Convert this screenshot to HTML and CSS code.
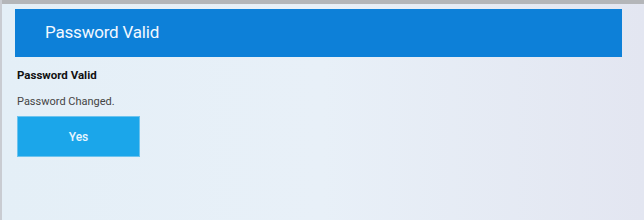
FILE: index.html
```html
<!DOCTYPE html>
<html lang="en">
<head>
  <meta charset="UTF-8">
  <title>Password Valid</title>
  <link rel="stylesheet" href="styles.css">
</head>
<body>
  <div class="topbar"></div>
  <div class="screen">
    <div class="header">Password Valid</div>
    <div class="dialog">
      <h2>Password Valid</h2>
      <p>Password Changed.</p>
      <button class="btn">Yes</button>
    </div>
  </div>
</body>
</html>
```
FILE: styles.css
```css
html, body {
  margin: 0;
  height: 100%;
}
body {
  font-family: Roboto, "Liberation Sans", sans-serif;
  background: linear-gradient(90deg, #e4eff7 0%, #e8f0f8 50%, #e3e6f1 100%);
  border-left: 2px solid #c9ccd2;
  box-sizing: border-box;
  overflow: hidden;
}
.topbar {
  height: 4px;
  background: #b4b6b9;
}
.screen {
  padding: 5px 22px 0 13px;
}
.header {
  background: #0d80d8;
  color: #f2f8ff;
  height: 48px;
  line-height: 46px;
  padding-left: 30px;
  font-size: 17px;
  letter-spacing: -0.2px;
}
.dialog {
  padding: 11px 0 0 2px;
}
.dialog h2 {
  margin: 0;
  font-size: 11.5px;
  font-weight: bold;
  color: #111;
}
.dialog p {
  margin: 13px 0 0;
  font-size: 11px;
  color: #444;
}
.btn {
  display: block;
  margin-top: 8px;
  width: 123px;
  height: 41px;
  border: 1px solid #6cc3ee;
  background: #1ba6ea;
  color: #e8f6ff;
  font-family: Roboto, "Liberation Sans", sans-serif;
  font-size: 12px;
  font-weight: 500;
  padding: 0;
}
```
